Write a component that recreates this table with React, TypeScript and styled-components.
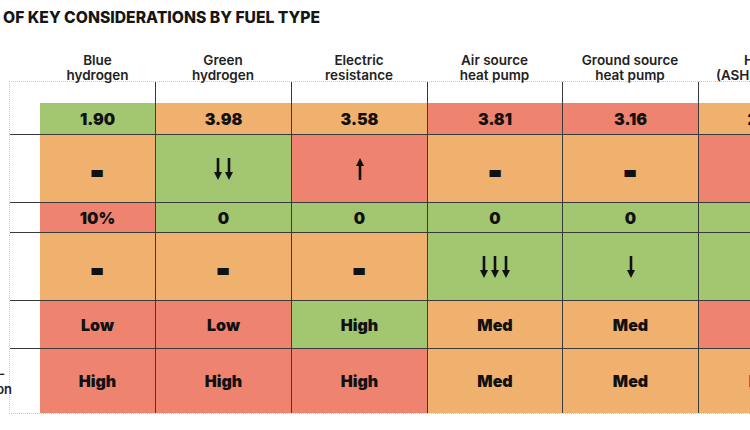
import * as React from "react";
import styled, { createGlobalStyle } from "styled-components";

type Tone = "g" | "o" | "r";

interface CellData {
  tone: Tone;
  value: string;
}

interface RowData {
  height: number;
  label?: string[];
  cells: CellData[];
}

const columns = [
  { name: ["Blue", "hydrogen"], width: 115 },
  { name: ["Green", "hydrogen"], width: 136 },
  { name: ["Electric", "resistance"], width: 136 },
  { name: ["Air source", "heat pump"], width: 135 },
  { name: ["Ground source", "heat pump"], width: 136 },
  { name: ["Hybrid", "(ASHP + boiler)"], width: 136 }
];

const c = (tone: Tone, value: string): CellData => ({ tone, value });

const rows: RowData[] = [
  {
    height: 31,
    cells: [c("g", "1.90"), c("o", "3.98"), c("o", "3.58"), c("r", "3.81"), c("r", "3.16"), c("o", "2.45")]
  },
  {
    height: 68,
    cells: [c("o", "-"), c("g", "down:2"), c("r", "up:1"), c("o", "-"), c("o", "-"), c("r", "up:1")]
  },
  {
    height: 30,
    cells: [c("r", "10%"), c("g", "0"), c("g", "0"), c("g", "0"), c("g", "0"), c("g", "0")]
  },
  {
    height: 68,
    cells: [c("o", "-"), c("o", "-"), c("o", "-"), c("g", "down:3"), c("g", "down:1"), c("g", "down:2")]
  },
  {
    height: 48,
    cells: [c("r", "Low"), c("r", "Low"), c("g", "High"), c("o", "Med"), c("o", "Med"), c("r", "Low")]
  },
  {
    height: 65,
    label: ["Consumer dis-", "ruption"],
    cells: [c("r", "High"), c("r", "High"), c("r", "High"), c("o", "Med"), c("o", "Med"), c("o", "Med")]
  }
];

const GRID_COLUMNS = `30px ${columns.map(col => `${col.width}px`).join(" ")}`;

const GlobalStyle = createGlobalStyle`
  html, body {
    margin: 0;
    padding: 0;
    background: #ffffff;
    overflow: hidden;
  }
`;

const Arrow: React.FC<{ up?: boolean }> = ({ up }) => (
  <svg width="8" height="22" viewBox="0 0 8 22" style={up ? { transform: "rotate(180deg)" } : undefined}>
    <rect x="2.7" y="0" width="2.6" height="15" fill="#111" />
    <polygon points="0,14 8,14 4,22" fill="#111" />
  </svg>
);

const CellContent: React.FC<{ value: string }> = ({ value }) => {
  if (value === "-") return <Dash>-</Dash>;
  if (value.startsWith("down:") || value.startsWith("up:")) {
    const [dir, count] = value.split(":");
    return (
      <Arrows>
        {Array.from({ length: Number(count) }).map((_, i) => (
          <Arrow key={i} up={dir === "up"} />
        ))}
      </Arrows>
    );
  }
  return <Value>{value}</Value>;
};

const App: React.FC = (): JSX.Element => {
  return (
    <Page>
      <GlobalStyle />
      <Title>of key considerations by fuel type</Title>

      <HeaderRow>
        <span />
        {columns.map(col => (
          <HeaderCell key={col.name.join(" ")}>
            {col.name.map(line => (
              <div key={line}>{line}</div>
            ))}
          </HeaderCell>
        ))}
      </HeaderRow>

      <Frame $rows={rows.map(r => `${r.height}px`).join(" ")}>
        <span />
        {columns.map((col, i) => (
          <Spacer key={col.name.join(" ")} $first={i === 0} />
        ))}

        {rows.map((row, r) => (
          <React.Fragment key={r}>
            <LabelCell $top={r === 0}>
              {row.label && (
                <LabelText>
                  {row.label.map((line, i) => (
                    <LabelLine key={line} $shift={i === 0 ? 7 : 0}>
                      {line}
                    </LabelLine>
                  ))}
                </LabelText>
              )}
            </LabelCell>
            {row.cells.map((cell, i) => (
              <Cell key={i} $tone={cell.tone} $first={i === 0} $top={r === 0}>
                <CellContent value={cell.value} />
              </Cell>
            ))}
          </React.Fragment>
        ))}
      </Frame>
    </Page>
  );
};

export default App;

const tones: Record<Tone, string> = {
  g: "#a3c671",
  o: "#f0b06e",
  r: "#ee8370"
};

const Page = styled.div`
  width: 750px;
  height: 430px;
  overflow: hidden;
  font-family: Inter, "Liberation Sans", sans-serif;
  color: #161616;
`;

const Title = styled.h1`
  margin: 0;
  padding: 8px 0 0 3px;
  height: 20px;
  font-size: 15.7px;
  line-height: 20px;
  font-weight: 800;
  text-transform: uppercase;
`;

const HeaderRow = styled.div`
  display: grid;
  grid-template-columns: ${GRID_COLUMNS};
  margin: 25px 0 0 10px;
  height: 28px;
  align-items: end;
  width: max-content;
`;

const HeaderCell = styled.div`
  text-align: center;
  font-size: 13.5px;
  line-height: 14.5px;
  font-weight: 600;
  color: #222;
  white-space: nowrap;
`;

const Frame = styled.div<{ $rows: string }>`
  display: grid;
  grid-template-columns: ${GRID_COLUMNS};
  grid-template-rows: 21px ${p => p.$rows};
  margin-left: 9px;
  width: max-content;
  border: 1px dotted #bfcddb;
  border-right: none;
`;

const Spacer = styled.div<{ $first: boolean }>`
  border-left: ${p => (p.$first ? "none" : "1px solid #3a3a3a")};
`;

const LabelCell = styled.div<{ $top: boolean }>`
  display: flex;
  align-items: center;
  justify-content: flex-end;
  padding-right: 28px;
  border-top: ${p => (p.$top ? "none" : "1px solid #3a3a3a")};
`;

const LabelText = styled.div`
  text-align: right;
  white-space: nowrap;
  font-size: 13px;
  line-height: 16px;
  font-weight: 600;
  color: #222;
`;

const LabelLine = styled.div<{ $shift: number }>`
  padding-right: ${p => p.$shift}px;
`;

const Cell = styled.div<{ $tone: Tone; $first: boolean; $top: boolean }>`
  display: flex;
  align-items: center;
  justify-content: center;
  background: ${p => tones[p.$tone]};
  border-left: ${p => (p.$first ? "none" : "1px solid #3a3a3a")};
  border-top: ${p => (p.$top ? "none" : "1px solid #3a3a3a")};
`;

const Value = styled.span`
  font-size: 16px;
  font-weight: 900;
  line-height: 1;
  color: #111;
`;

const Dash = styled.span`
  display: inline-block;
  font-size: 30px;
  font-weight: 900;
  line-height: 1;
  color: #111;
  transform: scale(1.1, 1.6);
`;

const Arrows = styled.div`
  display: flex;
  gap: 3px;
  align-items: center;
`;
